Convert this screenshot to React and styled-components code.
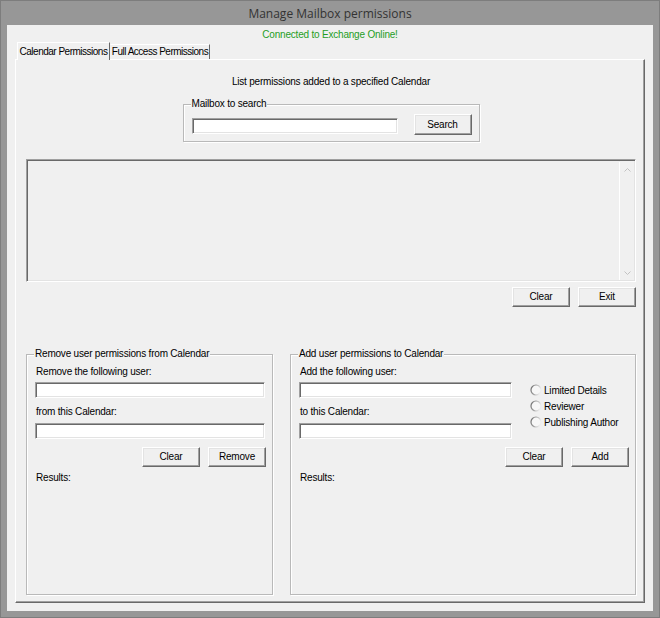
import React from 'react';
import styled, { createGlobalStyle } from 'styled-components';

const UI_FONT = `"Liberation Sans", Arial, sans-serif`;

const GlobalStyle = createGlobalStyle`
  html, body { margin: 0; padding: 0; }
  body { width: 660px; height: 618px; overflow: hidden; background: #979797; }
  *, *::before, *::after { box-sizing: border-box; }
`;

const Window = styled.div`
  width: 660px;
  height: 618px;
  background: #979797;
  border: 1px solid #7d7d7d;
  display: flex;
  flex-direction: column;
  font-family: ${UI_FONT};
  font-size: 10px;
  letter-spacing: -0.2px;
  color: #000;
`;

const TitleBar = styled.div`
  height: 24px;
  flex: none;
  display: flex;
  align-items: center;
  justify-content: center;
  padding-top: 1px;
  font-family: "Open Sans", "Noto Sans", sans-serif;
  font-size: 12px;
  letter-spacing: 0;
  color: #333;
`;

const Client = styled.div`
  margin: 0 6px;
  height: 586px;
  flex: none;
  background: #f0f0f0;
  display: flex;
  flex-direction: column;
`;

const Status = styled.div`
  height: 17px;
  padding-top: 3px;
  line-height: 14px;
  text-align: center;
  color: #1f9e1f;
`;

const TabStrip = styled.div`
  height: 17px;
  display: flex;
  align-items: flex-end;
  padding-left: 10px;
`;

const Tab = styled.div`
  position: relative;
  z-index: 1;
  width: ${(p) => p.$w}px;
  height: ${(p) => (p.$active ? 18 : 15)}px;
  margin-bottom: ${(p) => (p.$active ? -1 : 0)}px;
  background: #f0f0f0;
  border-top: 1px solid #fff;
  border-left: 1px solid ${(p) => (p.$active ? '#fff' : 'transparent')};
  border-right: 1px solid #696969;
  display: flex;
  align-items: ${(p) => (p.$active ? 'flex-start' : 'center')};
  padding-top: ${(p) => (p.$active ? 2 : 0)}px;
  justify-content: center;
  line-height: 14px;
  letter-spacing: -0.5px;
  white-space: nowrap;
`;

const Panel = styled.div`
  margin: 0 8px;
  height: 544px;
  flex: none;
  border-style: solid;
  border-width: 1px;
  border-color: #fff #696969 #696969 #fff;
  box-shadow: inset -1px -1px 0 #a0a0a0;
  display: flex;
  flex-direction: column;
  padding: 0 8px 0 10px;
`;

const Caption = styled.div`
  margin-top: 15px;
  line-height: 14px;
  text-align: center;
`;

const Group = styled.div`
  position: relative;
  border: 1px solid #b9b9b9;
  box-shadow: inset 1px 1px 0 #fff, 1px 1px 0 #fff;
  flex: none;
  width: ${(p) => p.$w}px;
  height: ${(p) => p.$h}px;
  padding: ${(p) => p.$pad};
`;

const Legend = styled.span`
  position: absolute;
  top: -8px;
  left: 7px;
  padding: 0 1px;
  line-height: 14px;
  background: #f0f0f0;
  white-space: nowrap;
`;

const SearchGroup = styled(Group)`
  align-self: center;
  margin-top: 15px;
  display: flex;
  align-items: flex-start;
  gap: 16px;
`;

const TextBox = styled.input.attrs({ type: 'text' })`
  display: block;
  width: ${(p) => p.$w}px;
  height: 16px;
  margin: ${(p) => p.$m || 0};
  padding: 0;
  background: #fff;
  border-style: solid;
  border-width: 1px;
  border-color: #a0a0a0 #fff #fff #a0a0a0;
  box-shadow: inset 1px 1px 0 #696969, inset -1px -1px 0 #e3e3e3;
  font: inherit;
  outline: none;
`;

const Button = styled.button`
  width: 58px;
  height: ${(p) => p.$h || 20}px;
  padding: 0;
  background: #f0f0f0;
  border-style: solid;
  border-width: 1px;
  border-color: #fff #696969 #696969 #fff;
  box-shadow: inset -1px -1px 0 #a0a0a0, inset 1px 1px 0 #e3e3e3;
  font: inherit;
  letter-spacing: inherit;
  color: #000;
  line-height: 14px;
`;

const ListBox = styled.div`
  margin-top: 17px;
  height: 123px;
  flex: none;
  display: flex;
  justify-content: flex-end;
  background: #f0f0f0;
  border-style: solid;
  border-width: 1px;
  border-color: #a0a0a0 #fff #fff #a0a0a0;
  box-shadow: inset 1px 1px 0 #696969, inset -1px -1px 0 #e3e3e3;
`;

const ScrollBar = styled.div`
  width: 15px;
  margin: 2px 1px 1px 0;
  border-left: 1px solid #fff;
  display: flex;
  flex-direction: column;
  align-items: center;
  justify-content: space-between;
  padding: 6px 0 5px;
`;

const ButtonRow = styled.div`
  display: flex;
  justify-content: flex-end;
  gap: 8px;
  margin-top: ${(p) => p.$mt}px;
`;

const BottomRow = styled.div`
  margin-top: 47px;
  display: flex;
  gap: 17px;
`;

const Label = styled.div`
  line-height: 14px;
  padding-left: 1px;
  margin-top: ${(p) => p.$mt || 0}px;
  white-space: nowrap;
`;

const TopArea = styled.div`
  display: flex;
  align-items: flex-start;
`;

const Column = styled.div`
  display: flex;
  flex-direction: column;
`;

const RadioList = styled.div`
  margin: 17px 0 0 18px;
  display: flex;
  flex-direction: column;
`;

const RadioRow = styled.label`
  height: 16px;
  display: flex;
  align-items: center;
  gap: 2px;
  white-space: nowrap;
`;

const Chevron = ({ up }) => (
  <svg width="7" height="4" viewBox="0 0 7 4">
    <path
      d={up ? 'M0.5 3.5 L3.5 0.5 L6.5 3.5' : 'M0.5 0.5 L3.5 3.5 L6.5 0.5'}
      fill="none"
      stroke="#c2c2c2"
      strokeWidth="1"
    />
  </svg>
);

const RadioDot = ({ id }) => (
  <svg width="12" height="12" viewBox="0 0 12 12">
    <defs>
      <linearGradient id={`rs${id}`} x1="0" y1="0" x2="1" y2="0.3">
        <stop offset="0" stopColor="#6a6a6a" />
        <stop offset="0.55" stopColor="#a8a8a8" />
        <stop offset="1" stopColor="#ececec" />
      </linearGradient>
    </defs>
    <circle cx="6" cy="6" r="5" fill="#f7f7f7" stroke={`url(#rs${id})`} strokeWidth="1.2" />
  </svg>
);

const Radio = ({ id, children }) => (
  <RadioRow>
    <RadioDot id={id} />
    <span>{children}</span>
  </RadioRow>
);

export default function App() {
  return (
    <>
      <GlobalStyle />
      <Window>
        <TitleBar>Manage Mailbox permissions</TitleBar>
        <Client>
          <Status>Connected to Exchange Online!</Status>
          <TabStrip>
            <Tab $active $w={93}>Calendar Permissions</Tab>
            <Tab $w={100}>Full Access Permissions</Tab>
          </TabStrip>
          <Panel>
            <Caption>List permissions added to a specified Calendar</Caption>
            <SearchGroup $w={297} $h={38} $pad="9px 7px 0 8px">
              <Legend>Mailbox to search</Legend>
              <TextBox $w={206} $m="4px 0 0 0" />
              <Button $h={21}>Search</Button>
            </SearchGroup>
            <ListBox>
              <ScrollBar>
                <Chevron up />
                <Chevron />
              </ScrollBar>
            </ListBox>
            <ButtonRow $mt={5}>
              <Button>Clear</Button>
              <Button>Exit</Button>
            </ButtonRow>
            <BottomRow>
              <Group $w={247} $h={241} $pad="10px 6px 0 8px">
                <Legend>Remove user permissions from Calendar</Legend>
                <Label>Remove the following user:</Label>
                <TextBox $w={230} $m="3px 0 0 0" />
                <Label $mt={7}>from this Calendar:</Label>
                <TextBox $w={230} $m="4px 0 0 0" />
                <ButtonRow $mt={8}>
                  <Button>Clear</Button>
                  <Button>Remove</Button>
                </ButtonRow>
                <Label $mt={4}>Results:</Label>
              </Group>
              <Group $w={346} $h={241} $pad="10px 6px 0 8px">
                <Legend>Add user permissions to Calendar</Legend>
                <TopArea>
                  <Column>
                    <Label>Add the following user:</Label>
                    <TextBox $w={213} $m="3px 0 0 0" />
                    <Label $mt={7}>to this Calendar:</Label>
                    <TextBox $w={213} $m="4px 0 0 0" />
                  </Column>
                  <RadioList>
                    <Radio id="a">Limited Details</Radio>
                    <Radio id="b">Reviewer</Radio>
                    <Radio id="c">Publishing Author</Radio>
                  </RadioList>
                </TopArea>
                <ButtonRow $mt={8}>
                  <Button>Clear</Button>
                  <Button>Add</Button>
                </ButtonRow>
                <Label $mt={4}>Results:</Label>
              </Group>
            </BottomRow>
          </Panel>
        </Client>
      </Window>
    </>
  );
}
